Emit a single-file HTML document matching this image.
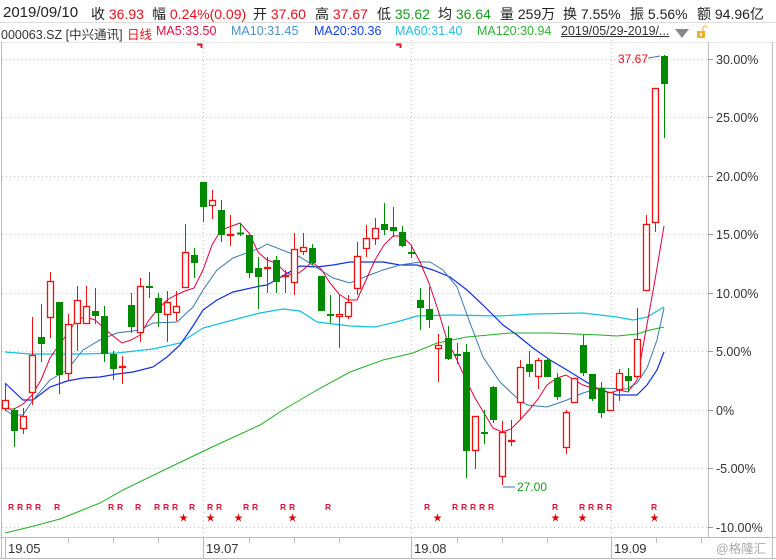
<!DOCTYPE html>
<html><head><meta charset="utf-8">
<style>
html,body{margin:0;padding:0;background:#fff;}
body{width:776px;height:560px;overflow:hidden;position:relative;font-family:"Liberation Sans","Noto Sans CJK SC",sans-serif;}
.t{position:absolute;white-space:nowrap;}
#h1{top:4px;font-size:15px;color:#222;}
#h2{top:24px;font-size:12.5px;color:#333;}
.r{color:#e8101e}.g{color:#1a9a1a}
svg{position:absolute;left:0;top:0;}
</style></head><body>
<svg id="c" width="776" height="560" xmlns="http://www.w3.org/2000/svg"></svg>
<div class="t" id="h1" style="left:3px">2019/09/10</div>
<div class="t" style="top:4px;font-size:14px;left:91px;color:#222">收 <span class="r">36.93</span></div>
<div class="t" style="top:4px;font-size:14px;left:152px;color:#222">幅 <span class="r">0.24%(0.09)</span></div>
<div class="t" style="top:4px;font-size:14px;left:253px;color:#222">开 <span class="r">37.60</span></div>
<div class="t" style="top:4px;font-size:14px;left:315px;color:#222">高 <span class="r">37.67</span></div>
<div class="t" style="top:4px;font-size:14px;left:377px;color:#222">低 <span class="g">35.62</span></div>
<div class="t" style="top:4px;font-size:14px;left:438px;color:#222">均 <span class="g">36.64</span></div>
<div class="t" style="top:4px;font-size:14px;left:500px;color:#222">量 259万</div>
<div class="t" style="top:4px;font-size:14px;left:563px;color:#222">换 7.55%</div>
<div class="t" style="top:4px;font-size:14px;left:630px;color:#222">振 5.56%</div>
<div class="t" style="top:4px;font-size:14px;left:697px;color:#222">额 94.96亿</div>
<div class="t" id="h2" style="left:1px">000063.SZ [中兴通讯]</div>
<div class="t" style="top:24px;font-size:12.5px;left:127px;color:#e8101e">日线</div>
<div class="t" style="top:24px;font-size:12.5px;left:156px;color:#e0103c">MA5:33.50</div>
<div class="t" style="top:24px;font-size:12.5px;left:231px;color:#4a90c8">MA10:31.45</div>
<div class="t" style="top:24px;font-size:12.5px;left:314px;color:#1040f0">MA20:30.36</div>
<div class="t" style="top:24px;font-size:12.5px;left:395px;color:#20c0e0">MA60:31.40</div>
<div class="t" style="top:24px;font-size:12.5px;left:477px;color:#30b030">MA120:30.94</div>
<div class="t" style="top:24px;font-size:12.5px;left:561px;color:#333;text-decoration:underline">2019/05/29-2019/...</div>
<script>
const s=document.getElementById('c');let h='';
const L=(x1,y1,x2,y2,c,w,d)=>h+=`<line x1="${x1}" y1="${y1}" x2="${x2}" y2="${y2}" stroke="${c}" stroke-width="${w||1}" ${d?'stroke-dasharray="'+d+'"':''} shape-rendering="crispEdges"/>`;
const T=(x,y,t,c,fs,a)=>h+=`<text x="${x}" y="${y}" fill="${c}" font-size="${fs}" font-family="Liberation Sans,Noto Sans CJK SC,sans-serif" ${a||''}>${t}</text>`;
L(0,22.5,776,22.5,'#ddd');L(0,42.5,776,42.5,'#e6e6e6');
L(1.5,42,1.5,558,'#bbb');
L(708.5,42,708.5,537,'#bbb');
L(772.5,42,772.5,558,'#bbb');
L(0,537.5,776,537.5,'#bbb');L(0,558.5,776,558.5,'#bbb');
L(5.5,537,5.5,558,'#bbb');L(203.5,537,203.5,558,'#bbb');L(411.5,537,411.5,558,'#bbb');L(611.5,537,611.5,558,'#bbb');
[68,113,158,249,294,339,457,502,547,656,701].forEach(x=>L(x+.5,537,x+.5,543,'#bbb'));
const ys=[59,117,176,234,293,351,410,468,527],lb=['30.00%','25.00%','20.00%','15.00%','10.00%','5.00%','0%','-5.00%','-10.00%'];
ys.forEach((y,i)=>{L(2,y+.5,708,y+.5,'#c4c4c4',1,'1,3');L(708,y+.5,713,y+.5,'#999');T(716,y+5,lb[i],'#333',12.5);});
[203,411,611].forEach(x=>L(x+.5,40,x+.5,537,'#c4c4c4',1,'1,3'));
h+=`<path d="M197 44.5H201.5V48" stroke="#e8101e" stroke-width="2" fill="none"/><path d="M396 44.5H400.5V48" stroke="#e8101e" stroke-width="2" fill="none"/>`;
const P=(pts,c,w)=>h+=`<polyline points="${pts}" fill="none" stroke="${c}" stroke-width="${w||1}"/>`;
P('5,533 30,527 60,519 80,511 100,503 123,490 160,472 210,448 260,425 283,410 317,390 350,372 383,360 413,353 437,343 467,337 510,333 550,333 600,335 617,336 637,334 650,330 664,327','#20b020');
P('5,352 30,354 60,354 83,354 117,353 153,349 180,343 203,328 233,320 260,313 283,309 300,311 317,322 350,326 375,327 400,321 417,316 450,315 500,316 533,314 583,313 617,317 633,320 647,317 664,307','#10c0e0',1.2);
P('5,383 23,400 33,400 50,387 67,381 83,378 100,377 117,374 133,372 153,367 167,357 180,345 193,326 203,310 217,300 233,292 260,286 267,285 300,266 317,267 333,265 350,262 383,262 400,265 417,265 433,270 450,277 467,290 483,305 503,325 517,335 533,348 550,360 567,370 583,380 600,390 617,395 637,395 647,385 657,370 664,352','#1030e0',1.2);
P('5,410 13,415 23,415 33,400 50,380 67,370 83,350 100,340 117,333 140,330 153,323 177,322 193,307 203,290 217,270 233,258 260,248 267,244 300,257 333,278 350,283 367,276 383,270 400,265 420,262 430,262 443,270 457,287 470,323 483,357 500,382 517,398 527,405 547,407 567,400 583,393 600,388 627,389 637,383 647,368 657,340 664,308','#3a78b0');
P('5,409 14,409 23,404 32,395 41,380 50,358 59,345 68,333 77,319 86,317 95,320 104,328 113,336 122,343 131,340 140,335 149,320 158,309 167,300 176,295 185,291 194,288 203,270 212,245 221,230 240,223 249,233 258,252 267,260 276,263 285,272 294,276 303,270 312,262 321,269 330,283 339,294 348,300 357,300 366,280 375,260 384,245 393,236 402,236 411,245 420,262 429,283 438,310 447,340 457,360 466,380 475,398 484,413 493,428 502,432 511,429 520,420 529,410 538,399 547,385 557,378 566,375 574,380 583,385 592,388 601,389 610,393 619,390 628,392 637,380 646,330 655,280 664,226','#e0003c');
const C=[[5,400,409,383,411,1],[14,410,431,408,447,0],[23,416,429,408,434,1],[32,355,393,317,405,1],[41,337,344,304,362,0],[50,281,318,272,338,1],[59,302,375,302,394,0],[68,324,374,314,380,1],[77,300,324,286,351,1],[86,306,324,286,324,1],[95,311,316,288,324,0],[104,316,354,306,362,0],[113,354,369,351,380,0],[122,366,368,356,384,1],[131,305,327,293,333,0],[140,286,333,278,342,1],[149,286,288,272,298,0],[158,298,313,293,327,0],[167,302,315,291,342,1],[176,306,313,291,321,1],[185,252,288,224,288,1],[194,255,263,248,278,0],[203,182,207,182,222,0],[212,200,206,190,219,1],[221,210,235,200,242,0],[230,234,236,215,246,1],[240,233,234,223,236,0],[249,235,273,235,278,0],[258,268,277,257,309,0],[267,267,269,257,293,1],[276,260,282,256,293,0],[285,275,277,270,293,1],[294,249,283,233,295,1],[303,247,252,233,255,1],[312,248,263,244,265,0],[321,276,311,276,311,0],[330,314,316,295,323,0],[339,314,317,295,348,1],[348,302,317,295,319,1],[357,256,289,242,295,1],[366,238,249,225,257,1],[375,228,239,218,245,1],[384,224,230,203,235,0],[393,227,231,207,237,0],[402,232,246,226,247,0],[411,252,254,245,258,0],[420,300,308,288,330,0],[429,309,320,287,328,0],[438,345,349,334,382,1],[448,338,359,326,360,0],[457,354,356,343,364,0],[466,352,451,344,478,0],[475,416,451,416,469,1],[484,432,434,410,444,0],[493,387,420,386,423,0],[502,432,477,421,485,1],[511,440,442,420,446,1],[520,367,403,360,420,1],[529,364,372,351,377,0],[538,360,377,358,389,1],[547,360,377,358,377,0],[557,378,397,373,400,0],[566,412,448,410,454,1],[574,378,403,378,403,1],[583,345,373,335,376,0],[592,374,399,374,401,0],[601,388,413,382,418,0],[610,392,411,392,411,1],[619,373,390,369,401,1],[628,376,381,368,391,0],[637,339,377,308,377,1],[646,224,291,215,291,1],[655,88,223,88,232,1],[664,56,84,55,138,0]];
C.forEach(([x,t,b,hi,lo,r])=>{const c=r?'#f01010':'#008a00';
 L(x+.5,hi,x+.5,lo,c,1.4);
 if(b-t<2){L(x-3,t+.5,x+4,t+.5,c,2);}
 else if(r){h+=`<rect x="${x-2.5}" y="${t+.5}" width="6" height="${b-t-1}" fill="#fff" stroke="${c}" stroke-width="1.3"/>`;}
 else h+=`<rect x="${x-3}" y="${t}" width="7" height="${b-t}" fill="${c}"/>`;});
T(618,63,'37.67','#e8101e',12);L(648,58,660,56,'#3a78b0');
L(503,487,515,487,'#3a78b0');T(517,491,'27.00','#1a9a1a',12);
[11,20,29,38,57,111,120,138,157,166,175,192,210,219,246,255,283,292,328,427,455,464,473,482,491,555,582,591,600,609,654].forEach(x=>T(x-3,510,'R','#e0103c',8.5,'font-weight="bold"'));
[183,210,238,292,437,555,582,654].forEach(x=>T(x-4,521,'★','#e00000',9));
T(8,553,'19.05','#333',13);T(206,553,'19.07','#333',13);T(414,553,'19.08','#333',13);T(614,553,'19.09','#333',13);
T(716,553,'@格隆汇','#aaa',12.5);
h+=`<path d="M675 29H689L682 38Z" fill="#888"/><rect x="697" y="31" width="8" height="7" fill="#f0b030"/><rect x="700" y="33" width="2" height="3" fill="#fff"/><path d="M703 31V28A2 2 0 0 1 707 28" stroke="#f0b030" fill="none"/>`;
s.innerHTML=h;
</script>
</body></html>
